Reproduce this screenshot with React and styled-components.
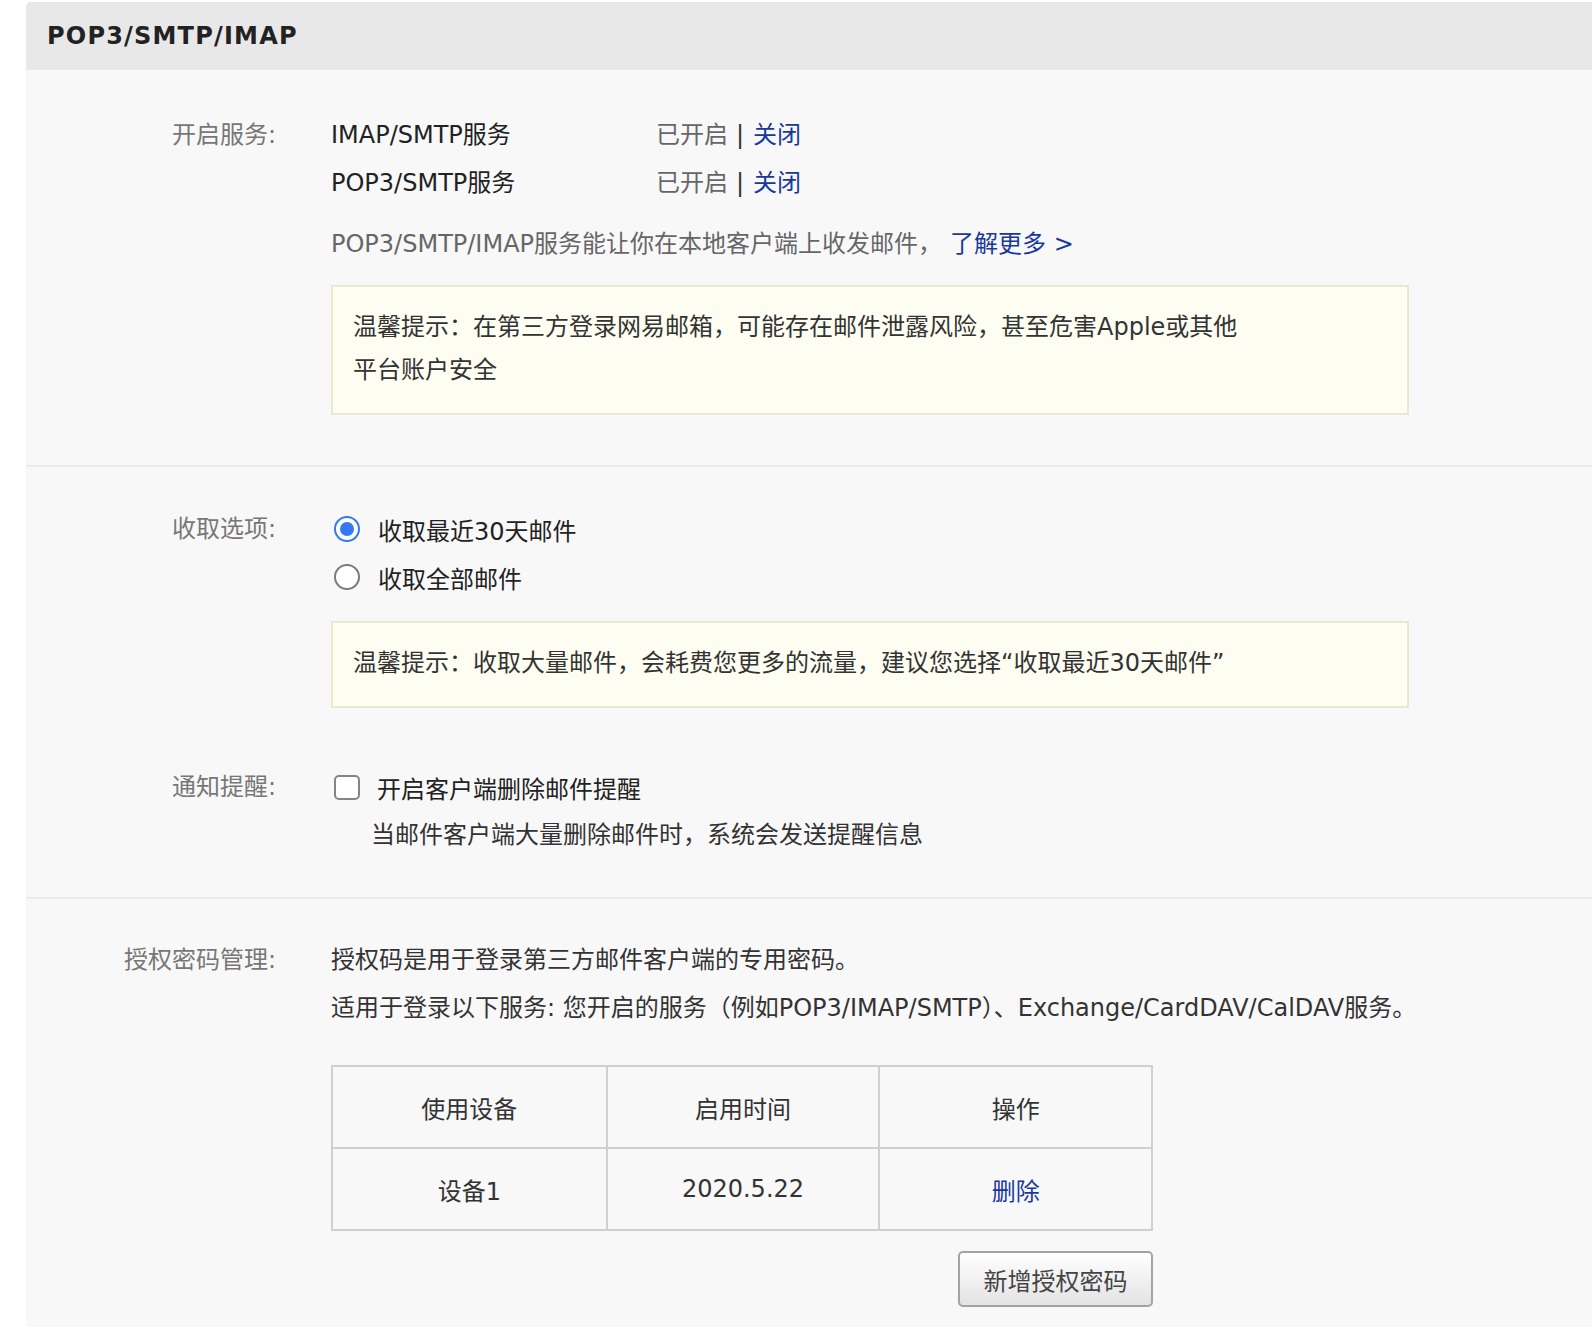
import React from "react";
import styled, { createGlobalStyle } from "styled-components";

const Global = createGlobalStyle`
  html, body { margin: 0; padding: 0; background: #fff; }
  body {
    font-family: "DejaVu Sans", "Noto Sans CJK SC", sans-serif;
    color: #222;
  }
`;

const Panel = styled.div`
  margin: 2px 0 0 26px;
  background: #f8f8f8;
  border-top-left-radius: 5px;
  overflow: hidden;
`;

const Header = styled.div`
  height: 68px;
  background: #e8e8e8;
  display: flex;
  align-items: center;
  padding-left: 21px;
  font-size: 24px;
  font-weight: bold;
  letter-spacing: 1.2px;
  color: #222;
`;

const Section = styled.section`
  display: grid;
  grid-template-columns: 250px 1fr;
  column-gap: 55px;
  row-gap: ${(p) => p.$rowGap || 0}px;
  padding: ${(p) => p.$pt}px 0 ${(p) => p.$pb}px;
  border-top: ${(p) => (p.$sep ? "2px solid #ebebeb" : "none")};
`;

const Label = styled.div`
  text-align: right;
  font-size: 24px;
  line-height: 48px;
  color: #777;
`;

const Content = styled.div`
  display: flex;
  flex-direction: column;
  align-items: flex-start;
`;

const Line = styled.div`
  display: flex;
  align-items: center;
  font-size: 24px;
  line-height: 48px;
  color: ${(p) => p.$color || "#222"};
  margin-top: ${(p) => p.$mt || 0}px;
  padding-left: ${(p) => p.$indent || 0}px;
`;

const ServiceName = styled.span`
  width: 325px;
`;

const Status = styled.span`
  color: #666;
`;

const Divider = styled.span`
  color: #333;
  margin: 0 9px 0 8px;
`;

const Link = styled.a`
  color: #18399c;
  text-decoration: none;
  cursor: pointer;
  margin-left: ${(p) => p.$ml || 0}px;
`;

const Tip = styled.div`
  box-sizing: border-box;
  width: 1078px;
  margin-top: ${(p) => p.$mt}px;
  padding: 19px 20px 21px;
  background: #fdfdf1;
  border: 2px solid #ebe8d2;
  font-size: 24px;
  line-height: 43px;
  color: #333;
`;

const OptionRow = styled.label`
  display: flex;
  align-items: center;
  height: 48px;
  padding-left: 3px;
  font-size: 24px;
  color: #222;
`;

const Radio = styled.span`
  box-sizing: border-box;
  width: 26px;
  height: 26px;
  border-radius: 50%;
  border: 2px solid ${(p) => (p.$checked ? "#3478f6" : "#7c7c7c")};
  background: #fff;
  margin-right: 18px;
  display: flex;
  align-items: center;
  justify-content: center;
  &::after {
    content: "";
    width: 14px;
    height: 14px;
    border-radius: 50%;
    background: ${(p) => (p.$checked ? "#3478f6" : "transparent")};
  }
`;

const Checkbox = styled.span`
  box-sizing: border-box;
  width: 26px;
  height: 25px;
  border-radius: 5px;
  border: 2px solid #858585;
  background: #fff;
  margin-right: 17px;
`;

const Table = styled.table`
  margin-top: 33px;
  width: 822px;
  table-layout: fixed;
  border-collapse: separate;
  border-spacing: 0;
  border: 2px solid #d0d0d0;
`;

const Cell = styled.td`
  height: 80px;
  padding: 0;
  text-align: center;
  font-size: 24px;
  color: #333;
  border-left: 2px solid #d0d0d0;
  border-top: 2px solid #d0d0d0;
  tr:first-child > & { border-top: none; }
  &:first-child { border-left: none; }
`;

const ButtonBar = styled.div`
  width: 822px;
  display: flex;
  justify-content: flex-end;
  margin-top: 20px;
`;

const Button = styled.button`
  box-sizing: border-box;
  width: 195px;
  height: 56px;
  border: 2px solid #a3a3a3;
  border-radius: 5px;
  background: linear-gradient(#ffffff, #e3e3e3);
  font-family: "DejaVu Sans", "Noto Sans CJK SC", sans-serif;
  font-size: 24px;
  color: #444;
  cursor: pointer;
`;

export default function App() {
  return (
    <>
      <Global />
      <Panel>
        <Header>POP3/SMTP/IMAP</Header>

        <Section $pt={41} $pb={50}>
          <Label>开启服务:</Label>
          <Content>
            <Line>
              <ServiceName>IMAP/SMTP服务</ServiceName>
              <Status>已开启</Status>
              <Divider>|</Divider>
              <Link>关闭</Link>
            </Line>
            <Line>
              <ServiceName>POP3/SMTP服务</ServiceName>
              <Status>已开启</Status>
              <Divider>|</Divider>
              <Link>关闭</Link>
            </Line>
            <Line $mt={13} $color="#666">
              <span>
                POP3/SMTP/IMAP服务能让你在本地客户端上收发邮件，<Link $ml={8}>了解更多 &gt;</Link>
              </span>
            </Line>
            <Tip $mt={17}>
              温馨提示：在第三方登录网易邮箱，可能存在邮件泄露风险，甚至危害Apple或其他
              <br />
              平台账户安全
            </Tip>
          </Content>
        </Section>

        <Section $sep $pt={38} $pb={38} $rowGap={55}>
          <Label>收取选项:</Label>
          <Content>
            <OptionRow>
              <Radio $checked />
              收取最近30天邮件
            </OptionRow>
            <OptionRow>
              <Radio />
              收取全部邮件
            </OptionRow>
            <Tip $mt={20}>温馨提示：收取大量邮件，会耗费您更多的流量，建议您选择“收取最近30天邮件”</Tip>
          </Content>
          <Label>通知提醒:</Label>
          <Content>
            <OptionRow>
              <Checkbox />
              开启客户端删除邮件提醒
            </OptionRow>
            <Line $indent={40} $color="#333">当邮件客户端大量删除邮件时，系统会发送提醒信息</Line>
          </Content>
        </Section>

        <Section $sep $pt={37} $pb={20}>
          <Label>授权密码管理:</Label>
          <Content>
            <Line $color="#333">授权码是用于登录第三方邮件客户端的专用密码。</Line>
            <Line $color="#333">适用于登录以下服务: 您开启的服务（例如POP3/IMAP/SMTP）、Exchange/CardDAV/CalDAV服务。</Line>
            <Table>
              <tbody>
                <tr>
                  <Cell>使用设备</Cell>
                  <Cell>启用时间</Cell>
                  <Cell>操作</Cell>
                </tr>
                <tr>
                  <Cell>设备1</Cell>
                  <Cell>2020.5.22</Cell>
                  <Cell>
                    <Link>删除</Link>
                  </Cell>
                </tr>
              </tbody>
            </Table>
            <ButtonBar>
              <Button>新增授权密码</Button>
            </ButtonBar>
          </Content>
        </Section>
      </Panel>
    </>
  );
}
